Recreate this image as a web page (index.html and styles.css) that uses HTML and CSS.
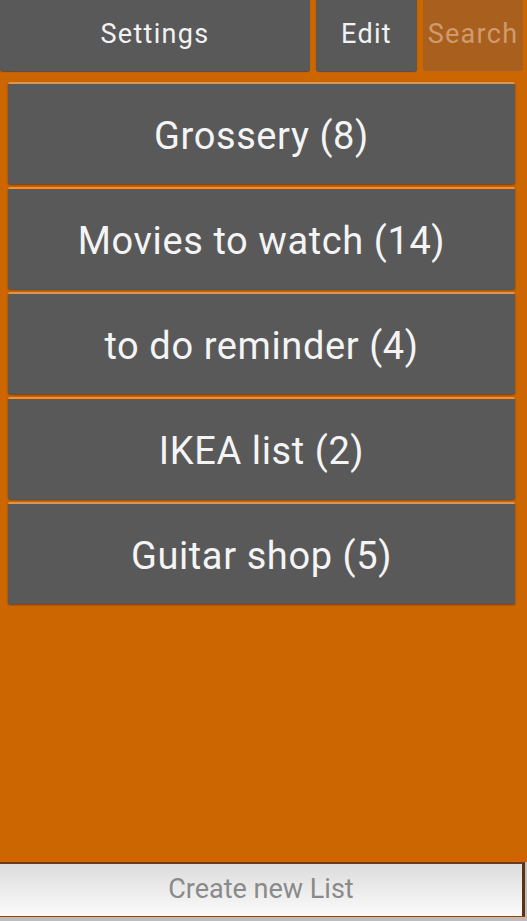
FILE: index.html
```html
<!DOCTYPE html>
<html>
<head>
<meta charset="utf-8">
<link rel="stylesheet" href="styles.css">
</head>
<body>
<div class="app">
  <div class="topbar">
    <div class="tbtn settings">Settings</div>
    <div class="tbtn edit">Edit</div>
    <div class="tbtn search">Search</div>
  </div>
  <div class="lists">
    <div class="item">Grossery (8)</div>
    <div class="item">Movies to watch (14)</div>
    <div class="item">to do reminder (4)</div>
    <div class="item">IKEA list (2)</div>
    <div class="item">Guitar shop (5)</div>
  </div>
  <div class="footer">
    <div class="create">Create new List</div>
  </div>
</div>
</body>
</html>
```
FILE: styles.css
```css
html, body {
  margin: 0;
  padding: 0;
  background: #cc6600;
}
.app {
  width: 527px;
  height: 921px;
  display: flex;
  flex-direction: column;
  font-family: Roboto, "Liberation Sans", sans-serif;
  background: #cc6600;
  overflow: hidden;
}
.topbar {
  display: flex;
  gap: 6px;
  height: 71px;
  padding-right: 4px;
}
.tbtn {
  display: flex;
  align-items: center;
  justify-content: center;
  color: #f2f2f2;
  font-size: 27px;
  letter-spacing: 1.3px;
  background: #595959;
  border-radius: 0 0 3px 3px;
  box-shadow: 0 1px 1px rgba(80, 40, 0, 0.6);
  padding-bottom: 3px;
  box-sizing: border-box;
}
.settings { width: 310px; }
.edit { width: 101px; }
.search {
  width: 100px;
  background: #a9601f;
  color: #cf9b6c;
  box-shadow: none;
}
.lists {
  display: flex;
  flex-direction: column;
  gap: 3px;
  padding: 11px 12px 0 8px;
}
.item {
  height: 102px;
  display: flex;
  align-items: center;
  justify-content: center;
  background: #595959;
  color: #f4f4f4;
  font-size: 38px;
  letter-spacing: 0.6px;
  border-top: 2px solid #d9965a;
  border-radius: 2px;
  box-shadow: 0 1px 2px rgba(90, 40, 0, 0.7);
  box-sizing: border-box;
  padding-top: 3px;
}
.footer {
  margin-top: auto;
  height: 59px;
  background: #bdbdbd;
  display: flex;
  flex-direction: column;
}
.create {
  height: 55px;
  margin-right: 2px;
  border-top: 2px solid #6e3c12;
  border-bottom: 1px solid #7a4a24;
  border-right: 3px solid #5b3214;
  background: linear-gradient(#dcdcdc, #fbfbfb);
  color: #8a8a8a;
  font-size: 27px;
  display: flex;
  align-items: center;
  justify-content: center;
  box-sizing: border-box;
  padding-bottom: 2px;
}
```
